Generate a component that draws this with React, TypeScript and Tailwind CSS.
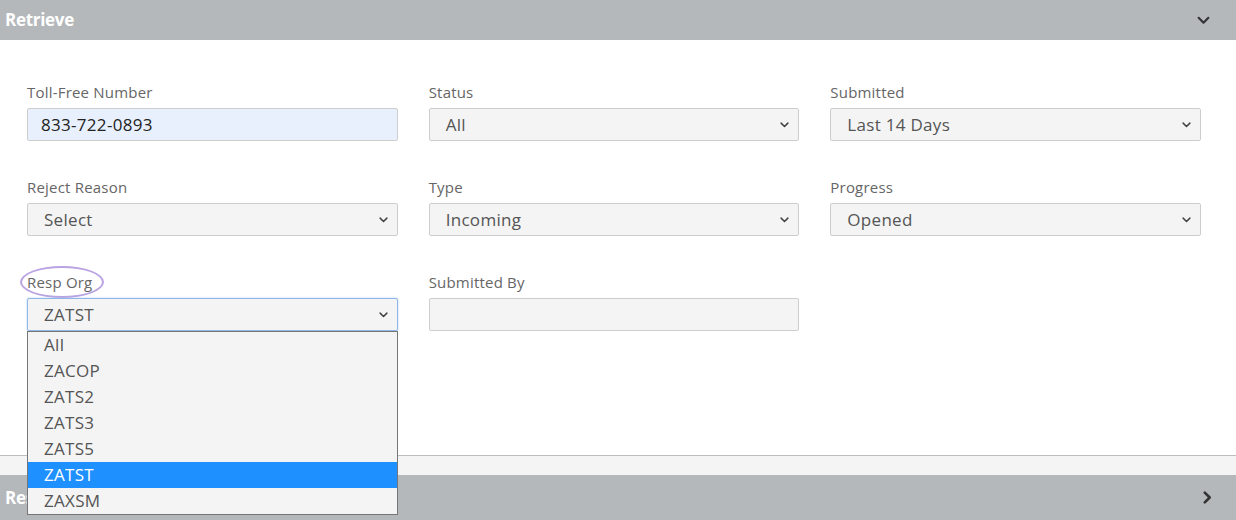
import { ReactNode } from "react"

const FONT = { fontFamily: "'Open Sans', 'Noto Sans', sans-serif" }

const Chevron = ({ className }: { className?: string }) => (
  <svg viewBox="0 0 12 8" className={className} fill="none">
    <path d="M1.5 1.5 6 6l4.5-4.5" stroke="currentColor" strokeWidth="2" strokeLinecap="round" strokeLinejoin="round" />
  </svg>
)

const ChevronRight = ({ className }: { className?: string }) => (
  <svg viewBox="0 0 8 12" className={className} fill="none">
    <path d="M1.5 1.5 6 6l-4.5 4.5" stroke="currentColor" strokeWidth="2.4" strokeLinecap="round" strokeLinejoin="round" />
  </svg>
)

type FieldProps = {
  label: ReactNode
  children: ReactNode
}

const Field = ({ label, children }: FieldProps) => (
  <div className="flex flex-col">
    <div className="h-[20px] text-[15px] leading-[20px] tracking-[0.2px] text-[#666]">{label}</div>
    <div className="mt-[6px]">{children}</div>
  </div>
)

const SelectBox = ({ value, focus }: { value?: string; focus?: boolean }) => (
  <div
    className={
      focus
        ? "flex h-[33px] items-center justify-between rounded-[2px] border border-[#8fb8e8] bg-[#f4f4f4] pl-[16px] pr-[9px] text-[17px] tracking-[0.3px] text-[#555] shadow-[0_0_2px_#a9c9ee]"
        : "flex h-[33px] items-center justify-between rounded-[2px] border border-[#cdcdcd] bg-[#f4f4f4] pl-[16px] pr-[9px] text-[17px] tracking-[0.3px] text-[#555]"
    }
  >
    <span>{value}</span>
    <Chevron className="h-[6px] w-[9px] text-[#444]" />
  </div>
)

const OPTIONS = ["All", "ZACOP", "ZATS2", "ZATS3", "ZATS5", "ZATST", "ZAXSM"]

export default function App() {
  return (
    <div style={FONT} className="relative h-[520px] w-[1236px] overflow-hidden bg-white">
      {/* Retrieve */}
      <div className="flex h-[40px] items-center justify-between bg-[#b4b8ba] pl-[5px] pr-[26px]">
        <span className="text-[17px] font-bold tracking-[-0.3px] text-white">Retrieve</span>
        <Chevron className="h-[9px] w-[13px] text-[#333]" />
      </div>

      <div className="h-[416px] border-b border-[#bdbdbd] pl-[27px] pr-[35px] pt-[42px]">
        <div className="grid grid-cols-3 gap-x-[31px] gap-y-[36px]">
          <Field label="Toll-Free Number">
            <div className="flex h-[33px] items-center rounded-[2px] border border-[#cdcdcd] bg-[#e8f0fe] pl-[13px] text-[17px] tracking-[0.3px] text-[#222]">
              833-722-0893
            </div>
          </Field>
          <Field label="Status">
            <SelectBox value="All" />
          </Field>
          <Field label="Submitted">
            <SelectBox value="Last 14 Days" />
          </Field>

          <Field label="Reject Reason">
            <SelectBox value="Select" />
          </Field>
          <Field label="Type">
            <SelectBox value="Incoming" />
          </Field>
          <Field label="Progress">
            <SelectBox value="Opened" />
          </Field>

          <Field
            label={
              <span className="relative">
                Resp Org
                <span className="absolute left-[-7px] top-[-6px] h-[32px] w-[84px] rounded-[50%] border-2 border-[#b9a3e3]" />
              </span>
            }
          >
            <div className="relative">
              <SelectBox value="ZATST" focus />
              <div className="absolute left-0 right-0 top-[33px] z-10 border border-[#767676] bg-[#f4f4f4] text-[17px] tracking-[0.3px] text-[#555]">
                {OPTIONS.map((o) => (
                  <div
                    key={o}
                    className={
                      o === "ZATST"
                        ? "flex h-[26px] items-center bg-[#1e90ff] pl-[16px] text-white"
                        : "flex h-[26px] items-center pl-[16px]"
                    }
                  >
                    {o}
                  </div>
                ))}
              </div>
            </div>
          </Field>
          <Field label="Submitted By">
            <div className="h-[33px] rounded-[2px] border border-[#cdcdcd] bg-[#f4f4f4]" />
          </Field>
        </div>
      </div>

      <div className="h-[19px] bg-[#f4f4f4]" />

      {/* Results */}
      <div className="flex h-[45px] items-center justify-between bg-[#b4b8ba] pl-[5px] pr-[24px]">
        <span className="text-[17px] font-bold tracking-[-0.3px] text-white">Results</span>
        <ChevronRight className="h-[13px] w-[9px] text-[#333]" />
      </div>
    </div>
  )
}
